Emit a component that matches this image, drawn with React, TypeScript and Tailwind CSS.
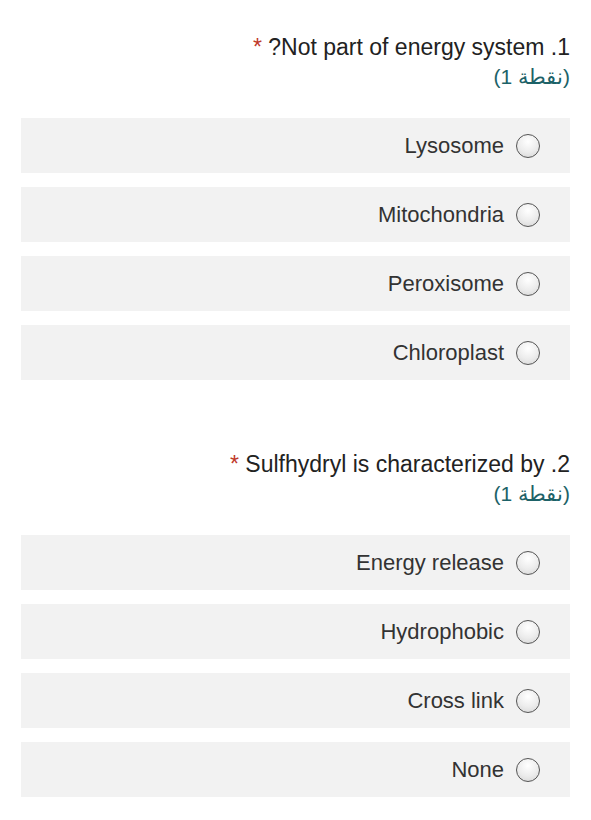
// Quiz questions in RTL (Microsoft Forms style)

const questions = [
  {
    title: "1. Not part of energy system?",
    options: ["Lysosome", "Mitochondria", "Peroxisome", "Chloroplast"],
  },
  {
    title: "2. Sulfhydryl is characterized by",
    options: ["Energy release", "Hydrophobic", "Cross link", "None"],
  },
];

// points label, pieces laid out left-to-right so the order is fixed: "(1 نقطة)"
function Points() {
  return (
    <span dir="ltr" className="inline-flex whitespace-pre">
      <span>(1 </span>
      <span>{"\u0646\u0642\u0637\u0629"}</span>
      <span>)</span>
    </span>
  );
}

function Radio() {
  return (
    <span className="block h-[24px] w-[24px] shrink-0 rounded-full border-[1.5px] border-[#555] bg-[radial-gradient(circle_at_50%_30%,#ffffff,#ececec_55%,#d4d4d4)]" />
  );
}

export default function App() {
  return (
    <div
      dir="rtl"
      className="min-h-[820px] w-[591px] bg-white pl-[21px] pr-[21px] pt-[32px] text-[#333] font-['Liberation_Sans','Noto_Sans',sans-serif]"
    >
      {questions.map((q, qi) => (
        <div key={qi} className={qi === 0 ? "" : "mt-[69px]"}>
          <div className="text-[23px] leading-[30px] text-[#222]">
            {q.title} <span className="text-[#c0392b]">*</span>
          </div>
          <div className="mt-[1px] text-[21px] leading-[28px] text-[#1d6268]">
            <Points />
          </div>
          <div className="mt-[27px] flex flex-col gap-[14px]">
            {q.options.map((o) => (
              <div
                key={o}
                className="flex h-[55px] items-center gap-[12px] bg-[#f2f2f2] pr-[30px] text-[22px] text-[#333]"
              >
                <Radio />
                <span>{o}</span>
              </div>
            ))}
          </div>
        </div>
      ))}
    </div>
  );
}
